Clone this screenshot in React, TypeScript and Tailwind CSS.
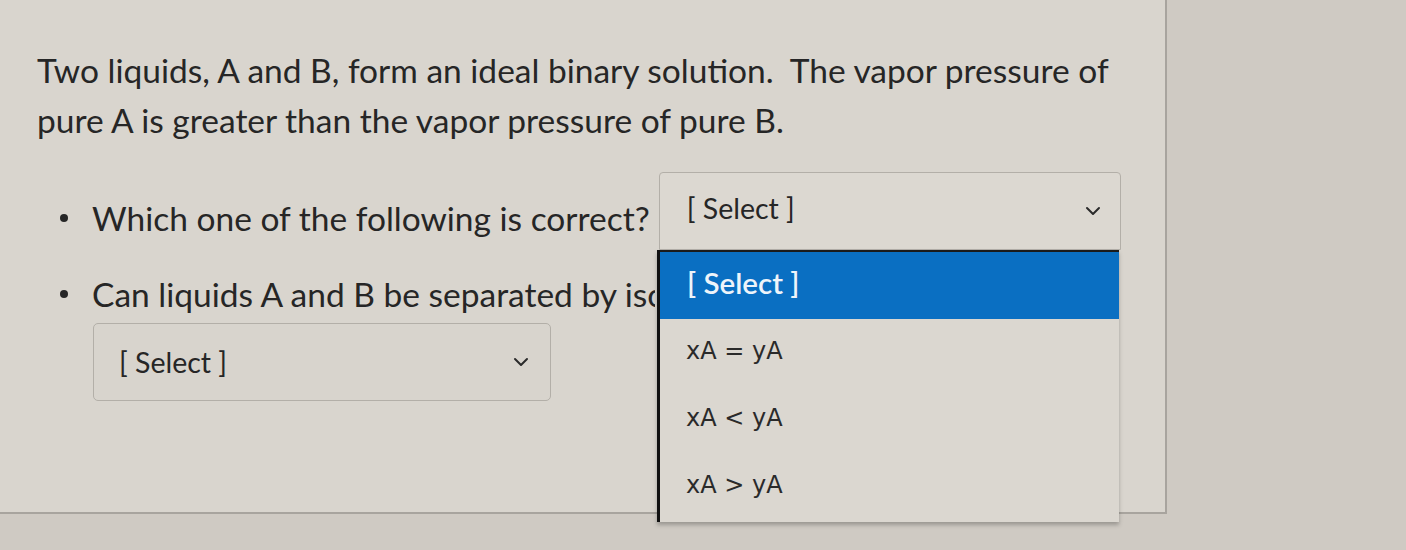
import React from 'react';

const Chevron = () => (
  <svg width="18" height="12" viewBox="0 0 18 12" fill="none">
    <path d="M3 3l6 6 6-6" stroke="#2b2b2b" strokeWidth="2" strokeLinecap="round" strokeLinejoin="round" />
  </svg>
);

const options = ['xA = yA', 'xA < yA', 'xA > yA'];

const App = () => {
  return (
    <div
      className="relative w-[1406px] h-[550px] overflow-hidden bg-[#cfcac3] text-[#262626]"
      style={{ fontFamily: 'Lato, "Open Sans", sans-serif' }}
    >
      <div className="w-[1167px] h-[514px] bg-[#d9d5ce] border-r-2 border-b-2 border-[#a8a49e]">
        {/* Question text */}
        <p className="pl-[37px] pt-[45px] pr-[20px] text-[33.5px] leading-[50px] whitespace-nowrap">
          Two liquids, A and B, form an ideal binary solution.&nbsp; The vapor pressure of
          <br />
          pure A is greater than the vapor pressure of pure B.
        </p>

        <ul className="mt-[27px] pl-[60px]">
          <li className="flex items-center h-[78px]">
            <span className="w-[8px] h-[8px] rounded-full bg-[#262626] mr-[24px] mt-[14px]" />
            <span className="text-[33.5px] mt-[14px]">Which one of the following is correct?</span>
            <div className="ml-[9px] w-[462px] h-[78px] flex items-center justify-between pl-[27px] pr-[18px] border border-[#b3afa8] rounded-t-[4px] bg-[#dcd8d1]">
              <span className="text-[28.5px] -mt-[6px]">[ Select ]</span>
              <Chevron />
            </div>
          </li>
          <li className="mt-[22px]">
            <div className="flex items-center h-[44px]">
              <span className="w-[8px] h-[8px] rounded-full bg-[#262626] mr-[24px]" />
              <span className="w-[563px] overflow-hidden text-[33.5px] whitespace-nowrap">Can liquids A and B be separated by isothermal distillation?</span>
            </div>
            <div className="ml-[33px] mt-[7px] w-[458px] h-[78px] flex items-center justify-between pl-[25px] pr-[20px] border border-[#b3afa8] rounded-[5px] bg-[#d8d4cd]">
              <span className="text-[28.5px]">[ Select ]</span>
              <Chevron />
            </div>
          </li>
        </ul>
      </div>

      {/* Open dropdown list */}
      <div className="absolute left-[657px] top-[250px] w-[462px] h-[272px] bg-[#dbd7d0] border-l-[3px] border-[#111] shadow-[0_3px_4px_rgba(0,0,0,0.25)]">
        <div className="h-[69px] bg-[#0a6fc2] border-t-2 border-[#1b1b1b] flex items-center pl-[27px]">
          <span className="text-[29.5px] font-semibold text-[#eef4fa] -mt-[4px]">[ Select ]</span>
        </div>
        {options.map((o) => (
          <div
            key={o}
            className="h-[67px] flex items-center pl-[26px] text-[24px] text-[#2a2a2a]"
            style={{ fontFamily: '"DejaVu Sans", sans-serif' }}
          >
            <span className="-mt-[4px]">{o}</span>
          </div>
        ))}
      </div>
    </div>
  );
};

export default App;
